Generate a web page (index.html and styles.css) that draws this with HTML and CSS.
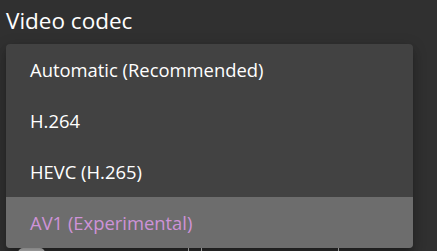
FILE: index.html
```html
<!DOCTYPE html>
<html>
<head>
<meta charset="utf-8">
<link rel="stylesheet" href="styles.css">
</head>
<body>
<div class="page">
  <div class="title">Video codec</div>
  <div class="under">
    <div class="knob"></div>
    <div class="line l1"></div>
    <div class="line l2"></div>
    <div class="line l3"></div>
  </div>
  <ul class="menu">
    <li class="item">Automatic (Recommended)</li>
    <li class="item">H.264</li>
    <li class="item">HEVC (H.265)</li>
    <li class="item selected">AV1 (Experimental)</li>
  </ul>
</div>
</body>
</html>
```
FILE: styles.css
```css
html, body {
  margin: 0;
  padding: 0;
  background: #303030;
  overflow: hidden;
}
.page {
  position: relative;
  width: 437px;
  height: 251px;
  font-family: "Open Sans", "Noto Sans", sans-serif;
  color: #ffffff;
}
.title {
  padding: 6px 0 0 6px;
  font-size: 22.5px;
  line-height: 30px;
}
.under {
  position: relative;
  height: 215px;
}
.knob {
  position: absolute;
  left: 18px;
  top: 212px;
  width: 27px;
  height: 10px;
  border-radius: 5px;
  background: #c8c8c8;
}
.line {
  position: absolute;
  top: 212px;
  width: 1px;
  height: 10px;
  background: #d0d0d0;
}
.l1 { left: 188px; }
.l2 { left: 201px; }
.l3 { left: 338px; }
.menu {
  position: absolute;
  left: 6px;
  top: 44px;
  width: 407px;
  margin: 0;
  padding: 0;
  list-style: none;
  background: #424242;
  border-radius: 4px;
  box-shadow: 0 5px 5px -3px rgba(0,0,0,0.2), 0 8px 10px 1px rgba(0,0,0,0.14), 0 3px 14px 2px rgba(0,0,0,0.12);
  overflow: hidden;
}
.item {
  height: 51px;
  display: flex;
  align-items: center;
  padding-left: 24px;
  font-size: 18.4px;
  color: #ffffff;
}
.selected {
  background: #6d6d6d;
  color: #ce93d8;
}
```
